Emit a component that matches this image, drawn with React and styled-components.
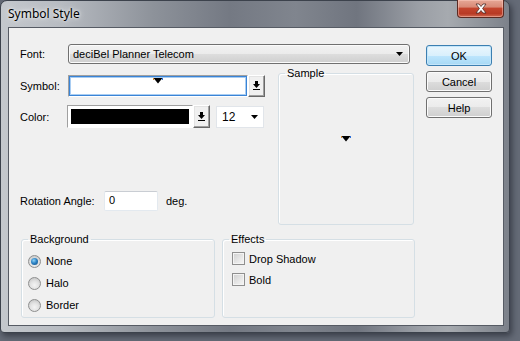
import React from 'react';
import styled, { createGlobalStyle } from 'styled-components';

const GlobalStyle = createGlobalStyle`
  html, body {
    margin: 0;
    padding: 0;
    background: #656b77;
    width: 520px;
    height: 341px;
    overflow: hidden;
  }
  * {
    box-sizing: border-box;
  }
`;

const Window = styled.div`
  width: 510px;
  height: 333px;
  display: flex;
  flex-direction: column;
  border: 1px solid #3c424c;
  border-radius: 7px 7px 4px 4px;
  background: linear-gradient(
    90deg,
    #c4c8cd 0%,
    #b7bbc1 12%,
    #8d929a 30%,
    #747983 45%,
    #80858e 58%,
    #70757f 70%,
    #9a9ea5 82%,
    #a6aaaf 88%,
    #7c818a 100%
  );
  box-shadow: 2px 3px 6px rgba(20, 24, 32, 0.55);
`;

const TitleBar = styled.div`
  height: 26px;
  display: flex;
  justify-content: space-between;
  align-items: flex-start;
`;

const Title = styled.div`
  padding: 5px 0 0 7px;
  font-family: 'Noto Sans', 'Open Sans', sans-serif;
  font-size: 12px;
  line-height: 16px;
  color: #000;
  text-shadow: 0 0 6px rgba(255, 255, 255, 0.9), 0 0 3px rgba(255, 255, 255, 0.8);
`;

const CloseButton = styled.div`
  width: 47px;
  height: 18px;
  margin: -1px 5px 0 0;
  display: flex;
  align-items: center;
  justify-content: center;
  border: 1px solid #5b2a22;
  border-top: none;
  border-radius: 0 0 4px 4px;
  background: linear-gradient(
    180deg,
    #e6a796 0%,
    #d98a77 40%,
    #c3442d 50%,
    #b83a25 80%,
    #d06a52 100%
  );
  box-shadow: inset 0 0 0 1px rgba(255, 210, 200, 0.45);
`;

const Client = styled.div`
  height: 299px;
  margin: 0 5px 0 7px;
  background: #f0f0f0;
  border: 1px solid #565b64;
  padding: 16px 0 0 11px;
  font-family: 'Liberation Sans', Arial, sans-serif;
  font-size: 11px;
  color: #000;
`;

const TopSection = styled.div`
  display: flex;
  align-items: flex-start;
`;

const LeftArea = styled.div`
  width: 395px;
  display: flex;
  flex-direction: column;
`;

const FontRow = styled.div`
  display: flex;
  align-items: center;
  height: 20px;
`;

const Label = styled.div`
  width: ${(p) => p.$width || 48}px;
  flex-shrink: 0;
`;

const Combo = styled.div`
  width: 342px;
  height: 20px;
  display: flex;
  align-items: center;
  justify-content: space-between;
  padding: 0 6px 0 4px;
  border: 1px solid #707070;
  border-radius: 3px;
  background: linear-gradient(180deg, #f2f2f2 0%, #ebebeb 50%, #dddddd 50%, #cfcfcf 100%);
  box-shadow: inset 0 0 0 1px #fbfbfb;
`;

const MidRow = styled.div`
  display: flex;
  margin-top: 3px;
`;

const FieldsColumn = styled.div`
  width: 258px;
  display: flex;
  flex-direction: column;
`;

const FieldRow = styled.div`
  display: flex;
  align-items: center;
  margin-top: ${(p) => p.$top}px;
`;

const SunkenBox = styled.div`
  width: ${(p) => p.$width}px;
  height: ${(p) => p.$height}px;
  border: 1px solid;
  border-color: #a0a0a0 #ffffff #ffffff #a0a0a0;
  background: #fff;
  padding: ${(p) => p.$pad || 0}px;
  display: flex;
  justify-content: center;
`;

const SymbolField = styled.div`
  flex: 1;
  display: flex;
  justify-content: center;
  padding-top: 2px;
  box-shadow: inset 0 0 0 1px #3a84d6, inset 0 0 0 2px #a9cdf2;
`;

const ColorFill = styled.div`
  flex: 1;
  background: #000;
`;

const PickButton = styled.div`
  width: 17px;
  height: ${(p) => p.$height}px;
  display: flex;
  align-items: center;
  justify-content: center;
  background: #f0f0f0;
  border: 1px solid;
  border-color: #ffffff #696969 #696969 #ffffff;
  box-shadow: inset -1px -1px 0 #a0a0a0, inset 1px 1px 0 #e3e3e3;
`;

const SizeCombo = styled.div`
  width: 48px;
  height: 22px;
  margin-left: 6px;
  display: flex;
  align-items: center;
  justify-content: space-between;
  padding: 0 5px 0 5px;
  background: #fff;
  border: 1px solid #e1e5ea;
  font-size: 12px;
`;

const TextInput = styled.div`
  width: 54px;
  height: 20px;
  padding: 2px 0 0 4px;
  background: #fff;
  border: 1px solid;
  border-color: #c9cdd3 #e3e9ef #e3e9ef #e3e9ef;
  border-radius: 2px;
`;

const Unit = styled.div`
  margin-left: 8px;
`;

const Group = styled.fieldset`
  margin: 0;
  padding: 0;
  min-width: 0;
  width: ${(p) => p.$width}px;
  height: ${(p) => p.$height}px;
  margin-left: ${(p) => p.$left || 0}px;
  border: 1px solid #d5dfe5;
  border-radius: 3px;
  box-shadow: inset 1px 1px 0 #fff;
`;

const Legend = styled.legend`
  margin-left: 6px;
  padding: 0 2px;
  line-height: 13px;
  font-size: 11px;
`;

const SampleArea = styled.div`
  height: 132px;
  display: flex;
  align-items: center;
  justify-content: center;
  padding-bottom: 14px;
`;

const Buttons = styled.div`
  margin: 1px 0 0 11px;
  display: flex;
  flex-direction: column;
  gap: 5px;
`;

const PushButton = styled.div`
  width: 66px;
  height: 21px;
  display: flex;
  align-items: center;
  justify-content: center;
  border: 1px solid ${(p) => (p.$default ? '#3c7fb1' : '#707070')};
  border-radius: 3px;
  background: ${(p) =>
    p.$default
      ? 'linear-gradient(180deg, #eaf6fd 0%, #d9f0fc 50%, #bee6fd 50%, #a7d9f5 100%)'
      : 'linear-gradient(180deg, #f2f2f2 0%, #ebebeb 50%, #dddddd 50%, #cfcfcf 100%)'};
  box-shadow: inset 0 0 0 1px ${(p) => (p.$default ? '#c4e6fa' : '#fbfbfb')};
  font-size: 11px;
`;

const BottomSection = styled.div`
  display: flex;
  margin-top: 8px;
`;

const GroupBody = styled.div`
  display: flex;
  flex-direction: column;
  padding: ${(p) => p.$pad};
`;

const OptionRow = styled.div`
  height: ${(p) => p.$height}px;
  display: flex;
  align-items: center;
  gap: ${(p) => p.$gap}px;
  font-size: 11px;
`;

const Radio = styled.span`
  width: 13px;
  height: 13px;
  border-radius: 50%;
  border: 1px solid #8e8f8f;
  background: radial-gradient(circle at 50% 65%, #f4f4f4 0%, #e2e2e2 45%, #bdbdbd 100%);
  display: flex;
  align-items: center;
  justify-content: center;
  &::after {
    content: '';
    display: ${(p) => (p.$checked ? 'block' : 'none')};
    width: 7px;
    height: 7px;
    border-radius: 50%;
    background: radial-gradient(circle at 40% 35%, #8fd3f7 0%, #2d83c5 45%, #0f4a7d 100%);
  }
`;

const Check = styled.span`
  width: 13px;
  height: 13px;
  border: 1px solid #8f8f8f;
  background: linear-gradient(135deg, #cfcfcf 0%, #e8e8e8 60%, #f6f6f6 100%);
  box-shadow: inset 0 0 0 1px #f4f4f4;
`;

const SymbolGlyph = () => (
  <svg width="10" height="6" viewBox="0 0 10 6">
    <polygon points="0.5,0 9.5,0 5,5.5" fill="#000" />
    <rect x="0" y="0" width="1" height="2" fill="#d88a2a" />
    <rect x="9" y="0" width="1" height="2" fill="#2a6ed8" />
  </svg>
);

const DownArrow = () => (
  <svg width="7" height="4" viewBox="0 0 7 4">
    <polygon points="0,0 7,0 3.5,4" fill="#000" />
  </svg>
);

const DropIcon = () => (
  <svg width="7" height="10" viewBox="0 0 7 10">
    <rect x="2" y="0" width="3" height="3" fill="#000" />
    <polygon points="0,3 7,3 3.5,7" fill="#000" />
    <rect x="0" y="8" width="7" height="1" fill="#000" />
  </svg>
);

const CloseGlyph = () => (
  <svg width="14" height="11" viewBox="0 0 14 11">
    <path
      d="M2 1 L5 1 L7 3.5 L9 1 L12 1 L8.6 5.5 L12 10 L9 10 L7 7.5 L5 10 L2 10 L5.4 5.5 Z"
      fill="#fff"
      stroke="#4a2a26"
      strokeWidth="0.8"
      strokeLinejoin="round"
    />
  </svg>
);

const App = () => {
  return (
    <>
      <GlobalStyle />
      <Window>
        <TitleBar>
          <Title>Symbol Style</Title>
          <CloseButton>
            <CloseGlyph />
          </CloseButton>
        </TitleBar>
        <Client>
          <TopSection>
            <LeftArea>
              <FontRow>
                <Label>Font:</Label>
                <Combo>
                  <span>deciBel Planner Telecom</span>
                  <DownArrow />
                </Combo>
              </FontRow>
              <MidRow>
                <FieldsColumn>
                  <FieldRow $top={8}>
                    <Label>Symbol:</Label>
                    <SunkenBox $width={180} $height={22}>
                      <SymbolField>
                        <SymbolGlyph />
                      </SymbolField>
                    </SunkenBox>
                    <PickButton $height={22}>
                      <DropIcon />
                    </PickButton>
                  </FieldRow>
                  <FieldRow $top={8}>
                    <Label $width={47}>Color:</Label>
                    <SunkenBox $width={126} $height={23} $pad={3}>
                      <ColorFill />
                    </SunkenBox>
                    <PickButton $height={23}>
                      <DropIcon />
                    </PickButton>
                    <SizeCombo>
                      <span>12</span>
                      <DownArrow />
                    </SizeCombo>
                  </FieldRow>
                  <FieldRow $top={63}>
                    <Label $width={84}>Rotation Angle:</Label>
                    <TextInput>0</TextInput>
                    <Unit>deg.</Unit>
                  </FieldRow>
                </FieldsColumn>
                <Group $width={136} $height={158}>
                  <Legend>Sample</Legend>
                  <SampleArea>
                    <SymbolGlyph />
                  </SampleArea>
                </Group>
              </MidRow>
            </LeftArea>
            <Buttons>
              <PushButton $default>OK</PushButton>
              <PushButton>Cancel</PushButton>
              <PushButton>Help</PushButton>
            </Buttons>
          </TopSection>
          <BottomSection>
            <Group $width={194} $height={85} $left={1}>
              <Legend>Background</Legend>
              <GroupBody $pad="4px 0 0 6px">
                <OptionRow $height={22} $gap={5}>
                  <Radio $checked />
                  None
                </OptionRow>
                <OptionRow $height={22} $gap={5}>
                  <Radio />
                  Halo
                </OptionRow>
                <OptionRow $height={22} $gap={5}>
                  <Radio />
                  Border
                </OptionRow>
              </GroupBody>
            </Group>
            <Group $width={193} $height={85} $left={7}>
              <Legend>Effects</Legend>
              <GroupBody $pad="2px 0 0 9px">
                <OptionRow $height={21} $gap={4}>
                  <Check />
                  Drop Shadow
                </OptionRow>
                <OptionRow $height={21} $gap={4}>
                  <Check />
                  Bold
                </OptionRow>
              </GroupBody>
            </Group>
          </BottomSection>
        </Client>
      </Window>
    </>
  );
};

export default App;
